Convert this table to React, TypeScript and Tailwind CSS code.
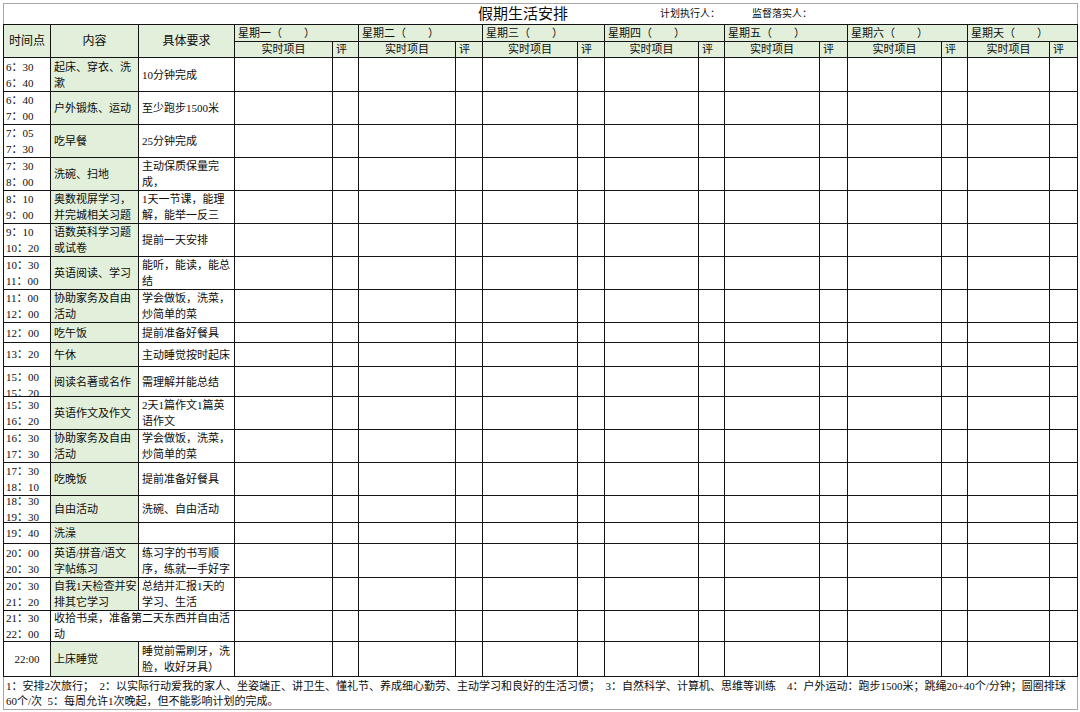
import React from "react";

type Row = {
  h: string;
  time: string[];
  content: string[];
  req?: string[];
  merged?: boolean;
  timeTop?: string;
  timeCenter?: boolean;
};

const rows: Row[] = [
  { h: "h-[33px]", time: ["6：30", "6：40"], content: ["起床、穿衣、洗", "漱"], req: ["10分钟完成"] },
  { h: "h-[32px]", time: ["6：40", "7：00"], content: ["户外锻炼、运动"], req: ["至少跑步1500米"] },
  { h: "h-[32px]", time: ["7：05", "7：30"], content: ["吃早餐"], req: ["25分钟完成"] },
  { h: "h-[32px]", time: ["7：30", "8：00"], content: ["洗碗、扫地"], req: ["主动保质保量完", "成，"] },
  { h: "h-[32px]", time: ["8：10", "9：00"], content: ["奥数视屏学习，", "并完城相关习题"], req: ["1天一节课，能理", "解，能举一反三"] },
  { h: "h-[32px]", time: ["9：10", "10：20"], content: ["语数英科学习题", "或试卷"], req: ["提前一天安排"] },
  { h: "h-[32px]", time: ["10：30", "11：00"], content: ["英语阅读、学习"], req: ["能听，能读，能总", "结"] },
  { h: "h-[32px]", time: ["11：00", "12：00"], content: ["协助家务及自由", "活动"], req: ["学会做饭，洗菜，", "炒简单的菜"] },
  { h: "h-[19px]", time: ["12：00"], content: ["吃午饭"], req: ["提前准备好餐具"] },
  { h: "h-[23px]", time: ["13：20", "14：40"], content: ["午休"], req: ["主动睡觉按时起床"], timeTop: "pt-[3px]" },
  { h: "h-[29px]", time: ["15：00", "15：20"], content: ["阅读名著或名作"], req: ["需理解并能总结"], timeTop: "pt-[2px]" },
  { h: "h-[32px]", time: ["15：30", "16：20"], content: ["英语作文及作文"], req: ["2天1篇作文1篇英", "语作文"] },
  { h: "h-[32px]", time: ["16：30", "17：30"], content: ["协助家务及自由", "活动"], req: ["学会做饭，洗菜，", "炒简单的菜"] },
  { h: "h-[32px]", time: ["17：30", "18：10"], content: ["吃晚饭"], req: ["提前准备好餐具"] },
  { h: "h-[26px]", time: ["18：30", "19：30"], content: ["自由活动"], req: ["洗碗、自由活动"] },
  { h: "h-[20px]", time: ["19：40"], content: ["洗澡"], req: [] },
  { h: "h-[33px]", time: ["20：00", "20：30"], content: ["英语/拼音/语文", "字帖练习"], req: ["练习字的书写顺", "序，练就一手好字"] },
  { h: "h-[32px]", time: ["20：30", "21：20"], content: ["自我1天检查并安", "排其它学习"], req: ["总结并汇报1天的", "学习、生活"] },
  { h: "h-[30px]", time: ["21：30", "22：00"], content: ["收拾书桌，准备第二天东西并自由活", "动"], merged: true },
  { h: "h-[34px]", time: ["22:00"], content: ["上床睡觉"], req: ["睡觉前需刷牙，洗", "脸，收好牙具）"], timeCenter: true },
];

const days = ["星期一", "星期二", "星期三", "星期四", "星期五", "星期六", "星期天"];

const colWidths = [
  "w-[47px]", "w-[88px]", "w-[96px]",
  "w-[98px]", "w-[26px]",
  "w-[97px]", "w-[27px]",
  "w-[95px]", "w-[27px]",
  "w-[94px]", "w-[26px]",
  "w-[95px]", "w-[28px]",
  "w-[94px]", "w-[26px]",
  "w-[82px]", "w-[28px]",
];

const cell = "border border-[#141414] p-0";
const green = "bg-[#e2efda]";

const Lines = ({ lines, h, className = "" }: { lines: string[]; h: string; className?: string }) => (
  <div className={`${h} overflow-hidden flex flex-col leading-[16px] ${className}`}>
    {lines.map((l, i) => (
      <div key={i} className="whitespace-nowrap">
        {l}
      </div>
    ))}
  </div>
);

export default function App() {
  return (
    <div className="w-[1080px] h-[712px] bg-white pt-[3px] pl-[3px] text-[11px] text-[#0d0d0d] font-['Liberation_Serif','Noto_Sans_CJK_SC',serif]">
      <div className="w-[1075px]">
        {/* title row */}
        <div className="h-[21px] border-t border-x border-[#a6a6a6] flex items-center">
          <span className="ml-[474px] text-[15px] leading-none">假期生活安排</span>
          <span className="ml-[92px] text-[10px] leading-none">计划执行人：</span>
          <span className="ml-[32px] text-[10px] leading-none">监督落实人：</span>
        </div>

        <table className="border-collapse table-fixed w-[1075px]">
          <colgroup>
            {colWidths.map((w, i) => (
              <col key={i} className={w} />
            ))}
          </colgroup>
          <thead>
            <tr>
              <th rowSpan={2} className={`${cell} ${green} font-normal text-[12px]`}>时间点</th>
              <th rowSpan={2} className={`${cell} ${green} font-normal text-[12px]`}>内容</th>
              <th rowSpan={2} className={`${cell} ${green} font-normal text-[12px]`}>具体要求</th>
              {days.map((d) => (
                <th key={d} colSpan={2} className={`${cell} ${green} font-normal text-left`}>
                  <div className="h-[16px] leading-[16px] pl-[3px] whitespace-pre">{d}（{"\u3000\u3000"}）</div>
                </th>
              ))}
            </tr>
            <tr>
              {days.map((d) => (
                <React.Fragment key={d}>
                  <th className={`${cell} ${green} font-normal`}>
                    <div className="h-[15px] leading-[15px]">实时项目</div>
                  </th>
                  <th className={`${cell} ${green} font-normal text-left`}>
                    <div className="h-[15px] leading-[15px] pl-[3px]">评</div>
                  </th>
                </React.Fragment>
              ))}
            </tr>
          </thead>
          <tbody>
            {rows.map((r, idx) => (
              <tr key={idx}>
                <td className={cell}>
                  <Lines
                    lines={r.time}
                    h={r.h}
                    className={`${r.timeTop ? `justify-start ${r.timeTop}` : "justify-center"} ${r.timeCenter ? "items-center" : "pl-[2px]"}`}
                  />
                </td>
                {r.merged ? (
                  <td colSpan={2} className={cell}>
                    <Lines lines={r.content} h={r.h} className="justify-center pl-[3px]" />
                  </td>
                ) : (
                  <>
                    <td className={`${cell} ${green}`}>
                      <Lines lines={r.content} h={r.h} className="justify-center pl-[3px]" />
                    </td>
                    <td className={cell}>
                      <Lines lines={r.req ?? []} h={r.h} className="justify-center pl-[3px]" />
                    </td>
                  </>
                )}
                {days.map((d) => (
                  <React.Fragment key={d}>
                    <td className={cell}></td>
                    <td className={cell}></td>
                  </React.Fragment>
                ))}
              </tr>
            ))}
          </tbody>
        </table>

        {/* notes */}
        <div className="h-[33px] border-b border-x border-[#a6a6a6] pl-[2px] pt-[2px] leading-[15px]">
          <div className="whitespace-pre">
            1：安排2次旅行；  2：以实际行动爱我的家人、坐姿端正、讲卫生、懂礼节、养成细心勤劳、主动学习和良好的生活习惯；  3：自然科学、计算机、思维等训练    4：户外运动：跑步1500米；跳绳20+40个/分钟；圆圈排球
          </div>
          <div className="whitespace-pre">60个/次  5：每周允许1次晚起，但不能影响计划的完成。</div>
        </div>
      </div>
    </div>
  );
}
